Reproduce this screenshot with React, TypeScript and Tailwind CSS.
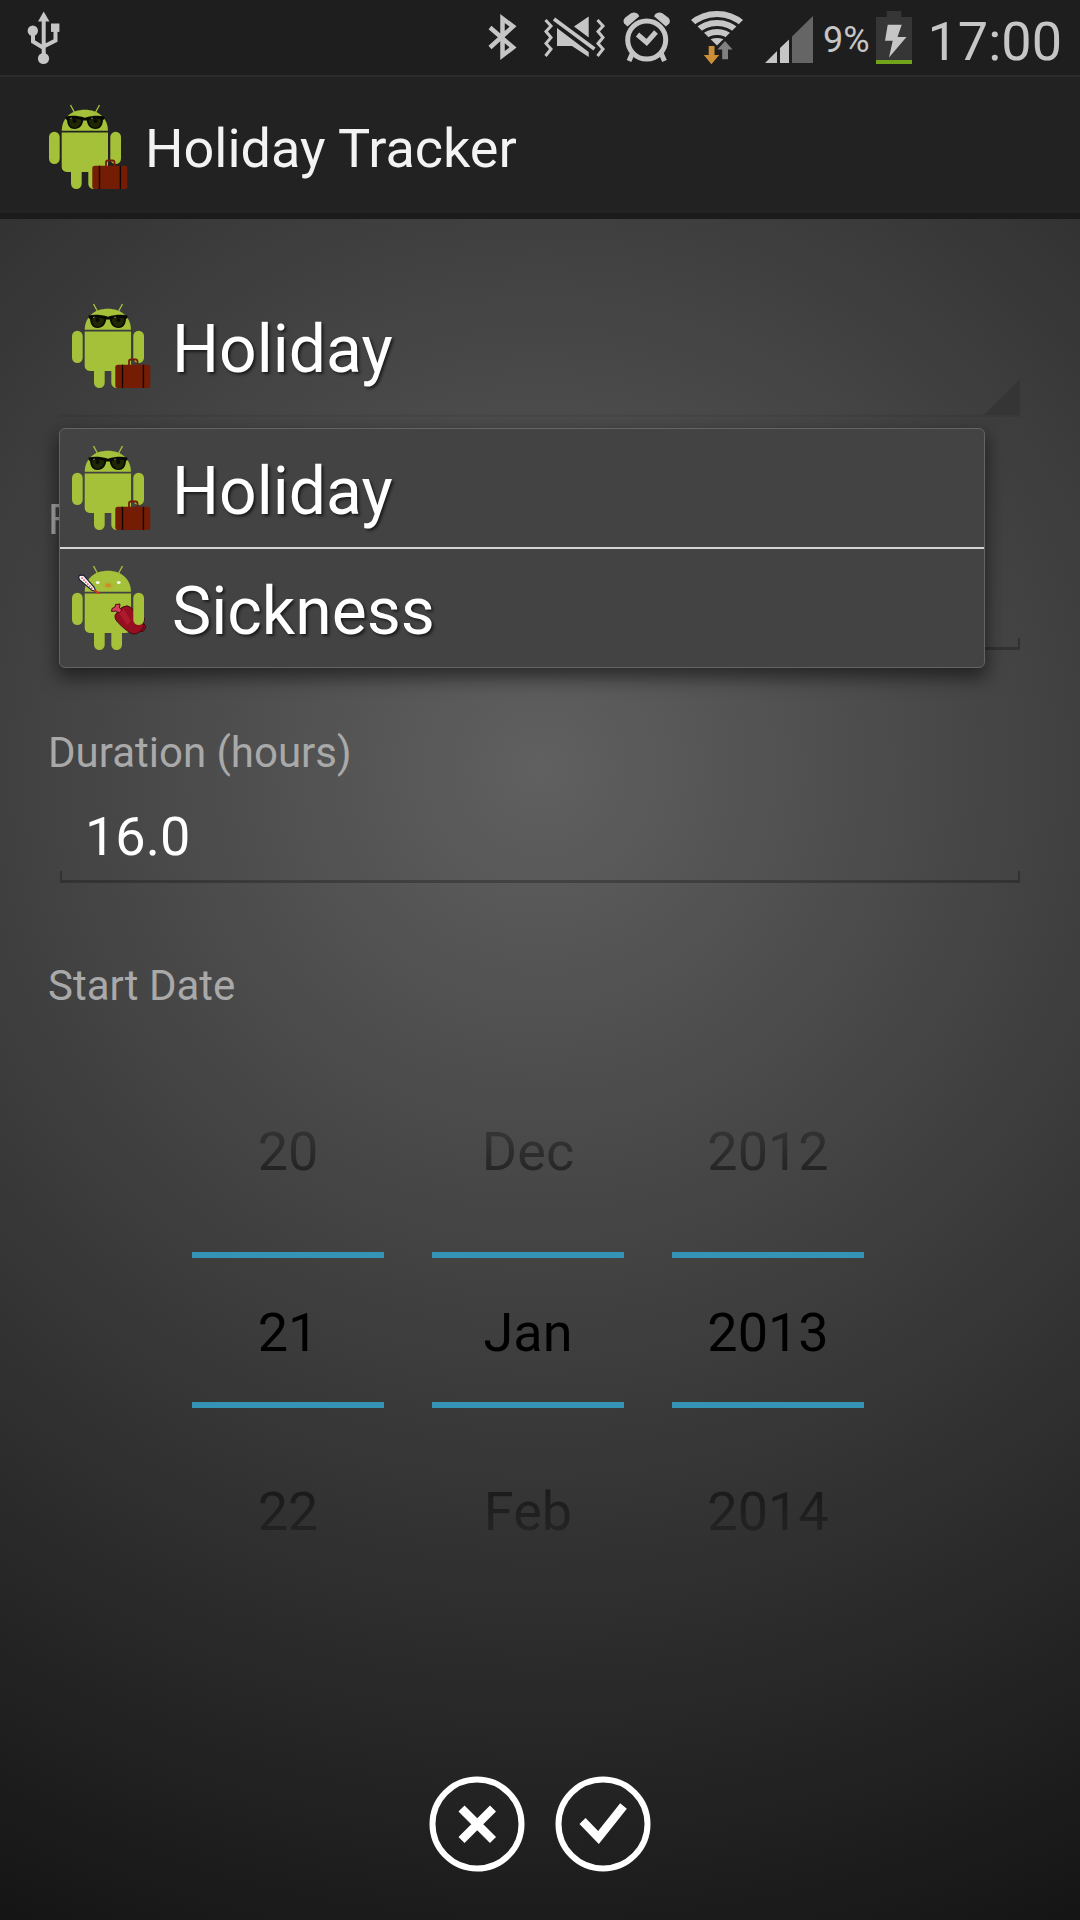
import { useState, type ReactNode } from "react";

const GREEN = "#a4c139";

function StatusIcon({ box, className, children }: { box: string; className: string; children: ReactNode }) {
  return (
    <svg viewBox={box} className={`h-[54px] shrink-0 ${className}`} fill="#c6c6c6" aria-hidden="true">
      {children}
    </svg>
  );
}

function UsbIcon() {
  return (
    <StatusIcon box="27 12 34 54" className="w-[34px]">
      <path d="M43.7 12.5L49.5 22.5H38z" />
      <circle cx="43.5" cy="59.5" r="5.6" />
      <circle cx="32.8" cy="31.8" r="5.2" />
      <path d="M51 24.5h8.4v8.4H51z" />
      <path
        d="M43.7 20V58M33 32V42.5L43.7 49M55.5 32V41.5L43.7 47.5"
        fill="none"
        stroke="#c6c6c6"
        strokeWidth="4"
      />
    </StatusIcon>
  );
}

function BluetoothIcon() {
  return (
    <StatusIcon box="487 12 39 54" className="w-[39px]">
      <path
        d="M490 28.5L513 48.5L502.5 56.5V19.5L513 27.5L490 48.5"
        fill="none"
        stroke="#c6c6c6"
        strokeWidth="4.5"
      />
    </StatusIcon>
  );
}

function MutedVibrateIcon() {
  return (
    <StatusIcon box="542 12 64 54" className="w-[64px]">
      <path
        d="M545.5 21l5.5 6-5 5.5 5 6-5 6 5 5.5-5.5 7M597.5 21l5.5 6-5 5.5 5 6-5 6 5 5.5-5.5 7"
        fill="none"
        stroke="#c6c6c6"
        strokeWidth="3"
      />
      <path d="M554 20L594.5 50" stroke="#c6c6c6" strokeWidth="3.6" />
      <path d="M574 27.5L588.7 17.5V38.5zM557 29L588.7 53V58L572 47H557z" />
    </StatusIcon>
  );
}

function AlarmIcon() {
  return (
    <StatusIcon box="622 12 49 54" className="w-[49px]">
      <g fill="none" stroke="#c6c6c6" strokeWidth="5">
        <circle cx="646.7" cy="41" r="19" />
        <path d="M637.5 35.5L646.7 43.5L656 33M632.5 54L629 62M661 54L664.5 62" />
      </g>
      <path d="M627.5 27.5L624.2 24.5Q622.5 21.5 625 18.7L631 14.2Q635 12.3 638 15L639.3 17.2z" />
      <path d="M665.9 27.5L669.2 24.5Q670.9 21.5 668.4 18.7L662.4 14.2Q658.4 12.3 655.4 15L654.1 17.2z" />
    </StatusIcon>
  );
}

function WifiIcon() {
  return (
    <StatusIcon box="687 11 60 54" className="w-[60px]">
      <clipPath id="wifi-wedge">
        <path d="M717 45.5L690 19V5H744V19z" />
      </clipPath>
      <g clipPath="url(#wifi-wedge)">
        <g fill="none" stroke="#c6c6c6" strokeWidth="6">
          <circle cx="717" cy="53" r="39" />
          <circle cx="717" cy="53" r="30" />
          <circle cx="717" cy="53" r="21" />
        </g>
        <circle cx="717" cy="53" r="15" />
      </g>
      <path d="M708.7 46h5.8v9h4.7L711.4 64.3L703.8 55h4.9z" fill="#cb8f38" />
      <path d="M725 41L732.5 49.5H728V59.3H722.2V49.5H717.5z" fill="#808080" />
    </StatusIcon>
  );
}

function SignalIcon() {
  return (
    <StatusIcon box="763 12 50 54" className="w-[50px]">
      <path d="M765 64L777 52V64zM780 64V49L789 40.5V64z" />
      <path d="M792 64V37.5L813 17V64z" fill="#656565" />
    </StatusIcon>
  );
}

function BatteryIcon() {
  return (
    <StatusIcon box="875 12 36 54" className="w-9">
      <path d="M875 18h10.7v-6h14.6v6H911V61H875z" fill="#363636" />
      <path d="M875 61h36v4H875z" fill="#70a31a" />
      <path d="M886.7 25.7h14L896.5 38h9L888 58.5L891.7 41.7H884z" />
    </StatusIcon>
  );
}

function HolidayDroid() {
  return (
    <svg viewBox="0 0 80 86" className="h-[86px] w-20 shrink-0" aria-hidden="true">
      <g fill={GREEN}>
        <path d="M13.7 26.7C14 14 23 5.7 36.8 5.7S59.7 14 60 26.7z" />
        <path d="M13.7 28.6H60V63a5 5 0 0 1-5 5H18.7a5 5 0 0 1-5-5z" />
        <rect x="1" y="27.8" width="10.7" height="32.2" rx="5.3" />
        <rect x="62.3" y="27.8" width="10.7" height="32.2" rx="5.3" />
        <rect x="23" y="60" width="10.7" height="25" rx="5.3" />
        <rect x="40.3" y="60" width="10.7" height="25" rx="5.3" />
      </g>
      <path d="M22.5 1L26.3 8M51.5 1L47.7 8" stroke={GREEN} strokeWidth="1.4" />
      <path
        d="M17.5 12.5C23 11.3 30 11.5 37 13.8C44 11.5 51 11.3 56.5 12.5V15L55 16C54.5 22 52 25 47.5 25C42 25 39.5 21 38.8 16.5H35.2C34.5 21 32 25 26.5 25C22 25 19.5 22 19 16L17.5 15z"
        fill="#080a02"
      />
      <path
        d="M21 15.3C25 14.3 30 14.6 33.3 16C33 20.5 30 23.8 26.5 23.8C23 23.8 21 20.5 21 15.3zM53 15.3C49 14.3 44 14.6 40.7 16C41 20.5 44 23.8 47.5 23.8C51 23.8 53 20.5 53 15.3z"
        fill="#1f2603"
      />
      <circle cx="26.5" cy="17" r="2" fill="#090b02" />
      <circle cx="47.5" cy="17" r="2" fill="#090b02" />
      <path d="M22 14.6l2-.6M43 14.6l2-.6" stroke="#8d9475" strokeWidth="0.8" />
      <path d="M58 62V58.5a2 2 0 0 1 2-2h4.5a2 2 0 0 1 2 2V62" fill="none" stroke="#741c04" strokeWidth="1.8" />
      <rect x="44.3" y="61.7" width="35" height="23.4" rx="2.5" fill="#741c04" />
      <path d="M51.5 61.7v23.4M72.4 61.7v23.4" stroke="#150500" strokeWidth="1.4" />
    </svg>
  );
}

function SicknessDroid() {
  return (
    <svg viewBox="0 0 80 86" className="h-[86px] w-20 shrink-0" aria-hidden="true">
      <g fill={GREEN}>
        <path d="M13.7 26.7C14 14 23 5.7 36.8 5.7S59.7 14 60 26.7z" />
        <path d="M13.7 28.6H60V63a5 5 0 0 1-5 5H18.7a5 5 0 0 1-5-5z" />
        <rect x="1" y="27.8" width="10.7" height="32.2" rx="5.3" />
        <rect x="23" y="60" width="10.7" height="25" rx="5.3" />
        <rect x="40.3" y="60" width="10.7" height="25" rx="5.3" />
      </g>
      <path d="M22.5 1L26.3 8M51.5 1L47.7 8" stroke={GREEN} strokeWidth="1.4" />
      <ellipse cx="26.7" cy="17.6" rx="1.9" ry="1.4" fill="#fff" />
      <ellipse cx="47.8" cy="17.6" rx="1.9" ry="1.4" fill="#fff" />
      <ellipse cx="37.3" cy="20.4" rx="4.6" ry="2.8" fill="#c9a02c" opacity="0.5" />
      <ellipse cx="37.3" cy="20.4" rx="2.8" ry="1.8" fill="#c58a20" opacity="0.8" />
      {/* thermometer */}
      <path
        d="M7.6 12.5Q7.6 10.2 10.3 10.2Q13 10.2 14 11.8L23 22L25 26.5L20.5 25L8.8 15z"
        fill="#fff"
        stroke="#1c1f33"
        strokeWidth="1.2"
      />
      <path d="M10.5 12.5L22 24.5" stroke="#e8474f" strokeWidth="1.6" strokeDasharray="1.6 1.2" />
      <path d="M23.5 25.5L28 28.3" stroke="#e0301f" strokeWidth="2" />
      {/* hot-water bottle */}
      <g stroke="#3d0510" strokeWidth="0.9" strokeLinejoin="round">
        <path d="M68 57L73.5 53.5L72.5 58L75 62L72 66.5L66 66z" fill="#8c0f1f" />
        <path
          d="M47 46Q50 41.5 56 40.8Q60 41.5 62 45L73 60Q72 65 69 66.5Q66 69.5 62 69Q56 67 46.5 57Q43.5 54 44 50.5z"
          fill="#960f20"
        />
        <path d="M41 43.5L44 42L44.5 39.5L49 39L48.5 43L51 45L48 48L45 46L40.5 46.5z" fill="#d9415a" />
      </g>
      <path d="M48 48L53 44L60 56L56 60z" fill="#ad1a2d" />
      <rect x="62.3" y="27.8" width="10.7" height="32.2" rx="5.3" fill={GREEN} />
    </svg>
  );
}

function StatusBar() {
  return (
    <div className="flex h-[77px] items-center justify-between border-b-2 border-[#2c2c2c] bg-[#1e1e1e] pr-[18px] pl-[27px] text-[#c6c6c6]">
      <UsbIcon />
      <div className="flex items-center">
        <div className="flex items-center gap-4">
          <BluetoothIcon />
          <MutedVibrateIcon />
          <AlarmIcon />
          <WifiIcon />
          <SignalIcon />
        </div>
        <span className="mr-1.5 ml-2.5 pt-1 text-4xl">9%</span>
        <BatteryIcon />
        <time className="ml-4 pt-2 text-[54px] leading-[60px]">17:00</time>
      </div>
    </div>
  );
}

const absenceTypes = [
  { name: "Holiday", Icon: HolidayDroid },
  { name: "Sickness", Icon: SicknessDroid },
];

function TypeSpinner() {
  const [selected, setSelected] = useState(absenceTypes[0]);

  return (
    <div className="relative mx-3">
      <button
        type="button"
        aria-haspopup="listbox"
        aria-expanded="true"
        className="relative flex h-[141px] w-full items-center gap-[21px] border-b-2 border-black/5 pl-[11px] text-left text-[66px] text-white"
      >
        <selected.Icon />
        <span className="pt-2 leading-[80px] [text-shadow:2px_2px_3px_rgba(0,0,0,0.6)]">{selected.name}</span>
        <span className="absolute right-0 bottom-0 size-9 bg-[#353535] [clip-path:polygon(100%_0,100%_100%,0_100%)]" />
      </button>
      <ul
        role="listbox"
        aria-label="Absence type"
        className="absolute top-full right-[35px] -left-px z-10 mt-[11px] divide-y-2 divide-[#d4d4d4] rounded-md border border-[#646464] bg-[#434343] shadow-[0_8px_18px_2px_rgba(0,0,0,0.5)]"
      >
        {absenceTypes.map((type) => (
          <li key={type.name} role="option" aria-selected={type === selected}>
            <button
              type="button"
              onClick={() => setSelected(type)}
              className="flex h-[118px] w-full items-center gap-[21px] pl-[11px] text-left text-[66px] text-white"
            >
              <type.Icon />
              <span className="pt-2 leading-[80px] [text-shadow:2px_2px_3px_rgba(0,0,0,0.6)]">{type.name}</span>
            </button>
          </li>
        ))}
      </ul>
    </div>
  );
}

function Field({ id, label, value }: { id: string; label: string; value: string }) {
  return (
    <div className="flex flex-col gap-1">
      <label htmlFor={id} className="text-[42px] leading-[48px] text-[#a9a9a9]">
        {label}
      </label>
      <div className="relative mx-3 border-b-[3px] border-black/25 before:absolute before:bottom-0 before:left-0 before:h-[9px] before:w-[2px] before:bg-black/25 after:absolute after:right-0 after:bottom-0 after:h-[9px] after:w-[2px] after:bg-black/25">
        <input
          id={id}
          defaultValue={value}
          className="block h-[99px] w-full bg-transparent px-[25px] pt-3 text-[54px] text-white outline-none"
        />
      </div>
    </div>
  );
}

function PickerColumn({ name, values }: { name: string; values: [string, string, string] }) {
  const [previous, current, next] = values;
  return (
    <div className="flex w-48 flex-col text-center text-[54px] leading-[72px] text-black">
      <button type="button" className="mb-16 [mask-image:linear-gradient(rgba(0,0,0,0.2),rgba(0,0,0,0.55))]">
        {previous}
      </button>
      <input
        aria-label={name}
        defaultValue={current}
        className="h-[156px] w-full border-y-[6px] border-[#3593b5] bg-transparent pt-1 text-center outline-none"
      />
      <button type="button" className="mt-[68px] [mask-image:linear-gradient(rgba(0,0,0,0.55),rgba(0,0,0,0.2))]">
        {next}
      </button>
    </div>
  );
}

export default function App() {
  return (
    <div className="flex min-h-screen flex-col bg-[radial-gradient(circle_1620px_at_50%_40%,#606060,#000)] font-[Roboto,sans-serif]">
      <StatusBar />
      <header className="flex h-[142px] items-center gap-[17px] border-b-[6px] border-[#1b1b1b] bg-[#222] pt-1 pl-12">
        <HolidayDroid />
        <h1 className="pt-1 text-[54px] leading-[64px] text-[#f3f3f3]">Holiday Tracker</h1>
      </header>
      <form className="flex grow flex-col px-12 pb-12" onSubmit={(event) => event.preventDefault()}>
        <div className="flex flex-col gap-[79px] pt-[57px]">
          <TypeSpinner />
          <Field id="from" label="F" value="" />
          <Field id="duration" label="Duration (hours)" value="16.0" />
        </div>
        <fieldset className="mt-[79px]">
          <legend className="text-[42px] leading-[48px] text-[#a9a9a9]">Start Date</legend>
          <div className="mt-[106px] mr-6 flex justify-center gap-12">
            <PickerColumn name="Day" values={["20", "21", "22"]} />
            <PickerColumn name="Month" values={["Dec", "Jan", "Feb"]} />
            <PickerColumn name="Year" values={["2012", "2013", "2014"]} />
          </div>
        </fieldset>
        <div className="mt-auto flex justify-center gap-[30px]">
          <button type="button" aria-label="Cancel">
            <svg viewBox="0 0 96 96" className="size-24" fill="none" stroke="#fff">
              <circle cx="48" cy="48" r="44.5" strokeWidth="6" />
              <path d="M32.5 32.5L64 64M64 32.5L32.5 64" strokeWidth="8.5" />
            </svg>
          </button>
          <button type="submit" aria-label="Save">
            <svg viewBox="0 0 96 96" className="size-24" fill="none" stroke="#fff">
              <circle cx="48" cy="48" r="44.5" strokeWidth="6" />
              <path d="M27.5 45L43.5 61.5L68.5 30" strokeWidth="8.5" />
            </svg>
          </button>
        </div>
      </form>
    </div>
  );
}
